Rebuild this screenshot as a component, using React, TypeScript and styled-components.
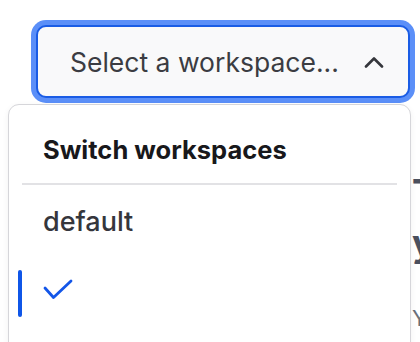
import styled, { createGlobalStyle } from "styled-components";

const GlobalStyle = createGlobalStyle`
    html, body {
        margin: 0;
        padding: 0;
        background: #ffffff;
        overflow: hidden;
    }
    body {
        font-family: Inter, "Noto Sans", "Liberation Sans", sans-serif;
        -webkit-font-smoothing: antialiased;
    }
`;

const Page = styled.div`
    position: relative;
    width: 420px;
    height: 342px;
    overflow: hidden;
`;

const Trigger = styled.button`
    display: flex;
    align-items: center;
    justify-content: space-between;
    box-sizing: border-box;
    width: 374px;
    height: 73px;
    margin: 25px 0 0 36px;
    padding: 0 24px 0 32px;
    background: #f9f9fa;
    border: 2px solid #1a5ce5;
    border-radius: 10px;
    box-shadow: 0 0 0 5px #5b8ff8;
    font-family: inherit;
    font-size: 26.5px;
    color: #3b3c42;
    cursor: pointer;
`;

const Chevron = styled.svg`
    width: 20px;
    height: 12px;
    flex-shrink: 0;
`;

const Behind = styled.section`
    margin: 70px 0 0 412px;
    white-space: nowrap;
`;

const Heading = styled.h1`
    margin: 0;
    font-size: 37px;
    line-height: 50px;
    font-weight: 700;
    color: #4b505e;
`;

const Lead = styled.p`
    margin: 36px 0 0;
    font-size: 22px;
    line-height: 28px;
    color: #6b6f7a;
`;

const Menu = styled.div`
    position: absolute;
    left: 8px;
    top: 104px;
    width: 403px;
    height: 300px;
    box-sizing: border-box;
    background: #ffffff;
    border: 1px solid #d6d6da;
    border-radius: 11px;
    box-shadow: 0 2px 6px rgba(0, 0, 0, 0.06);
`;

const MenuLabel = styled.div`
    padding: 30px 34px 18px;
    font-size: 25.5px;
    line-height: 30px;
    font-weight: 700;
    color: #18181b;
`;

const Separator = styled.div`
    height: 2px;
    margin: 0 13px;
    background: #e2e2e5;
`;

const Items = styled.div`
    padding-top: 4px;
`;

const Item = styled.div<{ $active?: boolean }>`
    position: relative;
    display: flex;
    align-items: center;
    height: 66px;
    padding: 0 34px;
    font-size: 27px;
    line-height: 32px;
    font-weight: 500;
    color: #35363c;

    &::before {
        content: "";
        display: ${(p) => (p.$active ? "block" : "none")};
        position: absolute;
        left: 9px;
        top: 15px;
        bottom: 4px;
        width: 4px;
        border-radius: 2px;
        background: #0f56e8;
    }
`;

const Check = styled.svg`
    width: 30px;
    height: 22px;
    margin-top: 4px;
`;

export default function App() {
    return (
        <Page>
            <GlobalStyle />
            <Trigger>
                <span>Select a workspace...</span>
                <Chevron viewBox="0 0 20 12">
                    <polyline
                        points="2,10.5 10,2.5 18,10.5"
                        fill="none"
                        stroke="#35363b"
                        strokeWidth="2.6"
                        strokeLinecap="round"
                        strokeLinejoin="round"
                    />
                </Chevron>
            </Trigger>
            <Behind>
                <Heading>
                    Teams
                    <br />
                    your way
                </Heading>
                <Lead>Your workspace settings</Lead>
            </Behind>
            <Menu>
                <MenuLabel>Switch workspaces</MenuLabel>
                <Separator />
                <Items>
                    <Item>default</Item>
                    <Item $active>
                        <Check viewBox="0 0 30 22">
                            <polyline
                                points="2,9 10.5,18.5 28,2"
                                fill="none"
                                stroke="#1356e8"
                                strokeWidth="2.8"
                                strokeLinecap="round"
                                strokeLinejoin="round"
                            />
                        </Check>
                    </Item>
                </Items>
            </Menu>
        </Page>
    );
}
